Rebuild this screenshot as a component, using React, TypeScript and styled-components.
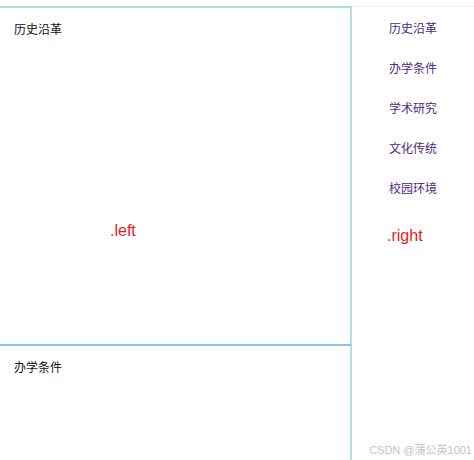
import React from "react";
import styled, { createGlobalStyle } from "styled-components";

const Global = createGlobalStyle`
  html, body { margin: 0; padding: 0; background: #fff; }
  body { font-family: "Noto Sans CJK SC", "Liberation Sans", sans-serif; overflow: hidden; }
`;

const Page = styled.div`
  display: flex;
  width: 474px;
  height: 460px;
  padding-top: 6px;
  box-sizing: border-box;
  position: relative;
  overflow: hidden;
`;

const Left = styled.div`
  width: 352px;
  display: flex;
  flex-direction: column;
  position: relative;
`;

const Section = styled.div<{ $h: number; $c: string }>`
  height: ${(p) => p.$h}px;
  flex-shrink: 0;
  box-sizing: border-box;
  border-top: 2px solid ${(p) => p.$c};
  border-right: 2px solid #b5dfe9;
  padding: 13px 14px;
  font-size: 12px;
  color: #111;
  line-height: 16px;
`;

const Right = styled.div`
  flex: 1;
  border-top: 1px solid #ececec;
  padding-top: 1px;
  display: flex;
  flex-direction: column;
  align-items: center;
  position: relative;
`;

const NavLink = styled.a`
  display: block;
  height: 40px;
  line-height: 40px;
  font-size: 12px;
  color: #4b2c85;
  text-decoration: none;
  text-align: center;
`;

const Label = styled.div<{ $x: number; $y: number }>`
  position: absolute;
  left: ${(p) => p.$x}px;
  top: ${(p) => p.$y}px;
  color: #e8201c;
  font-family: "Liberation Sans", Arial, sans-serif;
  font-size: 16px;
`;

const Watermark = styled.div`
  position: absolute;
  right: 2px;
  bottom: 3px;
  font-size: 11px;
  color: #c4c4c4;
  font-family: "Liberation Sans", "Noto Sans CJK SC", sans-serif;
`;

const items = ["历史沿革", "办学条件", "学术研究", "文化传统", "校园环境"];

export default function App() {
  return (
    <>
      <Global />
      <Page>
        <Left>
          <Section $h={338} $c="#abdfda">历史沿革</Section>
          <Section $h={200} $c="#86cadd">办学条件</Section>
          <Label $x={110} $y={216}>.left</Label>
        </Left>
        <Right>
          {items.map((t) => (
            <NavLink key={t} href="#">{t}</NavLink>
          ))}
          <Label $x={35} $y={220}>.right</Label>
        </Right>
        <Watermark>CSDN @蒲公英1001</Watermark>
      </Page>
    </>
  );
}
